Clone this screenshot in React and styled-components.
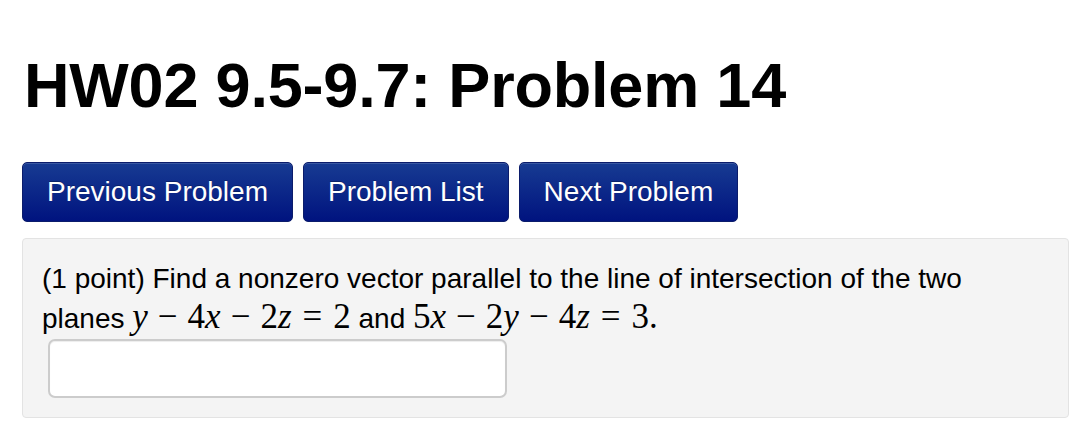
import React from "react";
import styled, { createGlobalStyle } from "styled-components";

const GlobalStyle = createGlobalStyle`
  html, body {
    margin: 0;
    padding: 0;
    background: #ffffff;
  }
  body {
    font-family: "Liberation Sans", Arial, Helvetica, sans-serif;
    color: #000;
  }
`;

const Page = styled.main`
  padding: 0 23px 0 22px;
`;

const Title = styled.h1`
  margin: 51px 0 0 2px;
  font-size: 63px;
  line-height: 1.1;
  font-weight: bold;
  letter-spacing: -0.2px;
`;

const Nav = styled.nav`
  display: flex;
  gap: 10px;
  margin-top: 42px;
`;

const NavButton = styled.button`
  height: 60px;
  padding: 0 24px;
  font-family: "Liberation Sans", Arial, sans-serif;
  font-size: 28px;
  color: #ffffff;
  text-shadow: 0 -1px 0 rgba(0, 0, 0, 0.25);
  background: linear-gradient(to bottom, #173b92, #00137f);
  border: 1px solid #0b1c6b;
  border-radius: 5px;
  box-shadow: inset 0 1px 0 rgba(255, 255, 255, 0.15);
  cursor: pointer;
`;

const ProblemBox = styled.section`
  margin-top: 16px;
  padding: 20px 19px 19px;
  background: #f4f4f4;
  border: 1px solid #e3e3e3;
  border-radius: 4px;
  font-size: 28px;
  line-height: 40px;
`;

const Text = styled.p`
  margin: 0;
`;

const Math = styled.span`
  font-family: "Liberation Serif", "Times New Roman", serif;
  font-size: 35px;
  line-height: 1;
`;

const V = styled.i`
  font-style: italic;
`;

const Op = styled.span`
  padding: 0 ${(p) => (p.$rel ? 11 : 10)}px;
`;

const AnswerInput = styled.input`
  display: block;
  width: 459px;
  height: 59px;
  box-sizing: border-box;
  margin-left: 6px;
  padding: 6px 10px;
  font-size: 28px;
  background: #ffffff;
  border: 2px solid #cccccc;
  border-radius: 7px;
  box-shadow: inset 0 1px 1px rgba(0, 0, 0, 0.075);
`;

export default function App() {
  return (
    <>
      <GlobalStyle />
      <Page>
        <Title>HW02 9.5-9.7: Problem 14</Title>
        <Nav>
          <NavButton>Previous Problem</NavButton>
          <NavButton>Problem List</NavButton>
          <NavButton>Next Problem</NavButton>
        </Nav>
        <ProblemBox>
          <Text>
            (1 point) Find a nonzero vector parallel to the line of intersection of the two
            <br />
            planes{" "}
            <Math>
              <V>y</V>
              <Op>−</Op>4<V>x</V>
              <Op>−</Op>2<V>z</V>
              <Op $rel>=</Op>2
            </Math>{" "}
            and{" "}
            <Math>
              5<V>x</V>
              <Op>−</Op>2<V>y</V>
              <Op>−</Op>4<V>z</V>
              <Op $rel>=</Op>3.
            </Math>
          </Text>
          <AnswerInput type="text" aria-label="answer" />
        </ProblemBox>
      </Page>
    </>
  );
}
